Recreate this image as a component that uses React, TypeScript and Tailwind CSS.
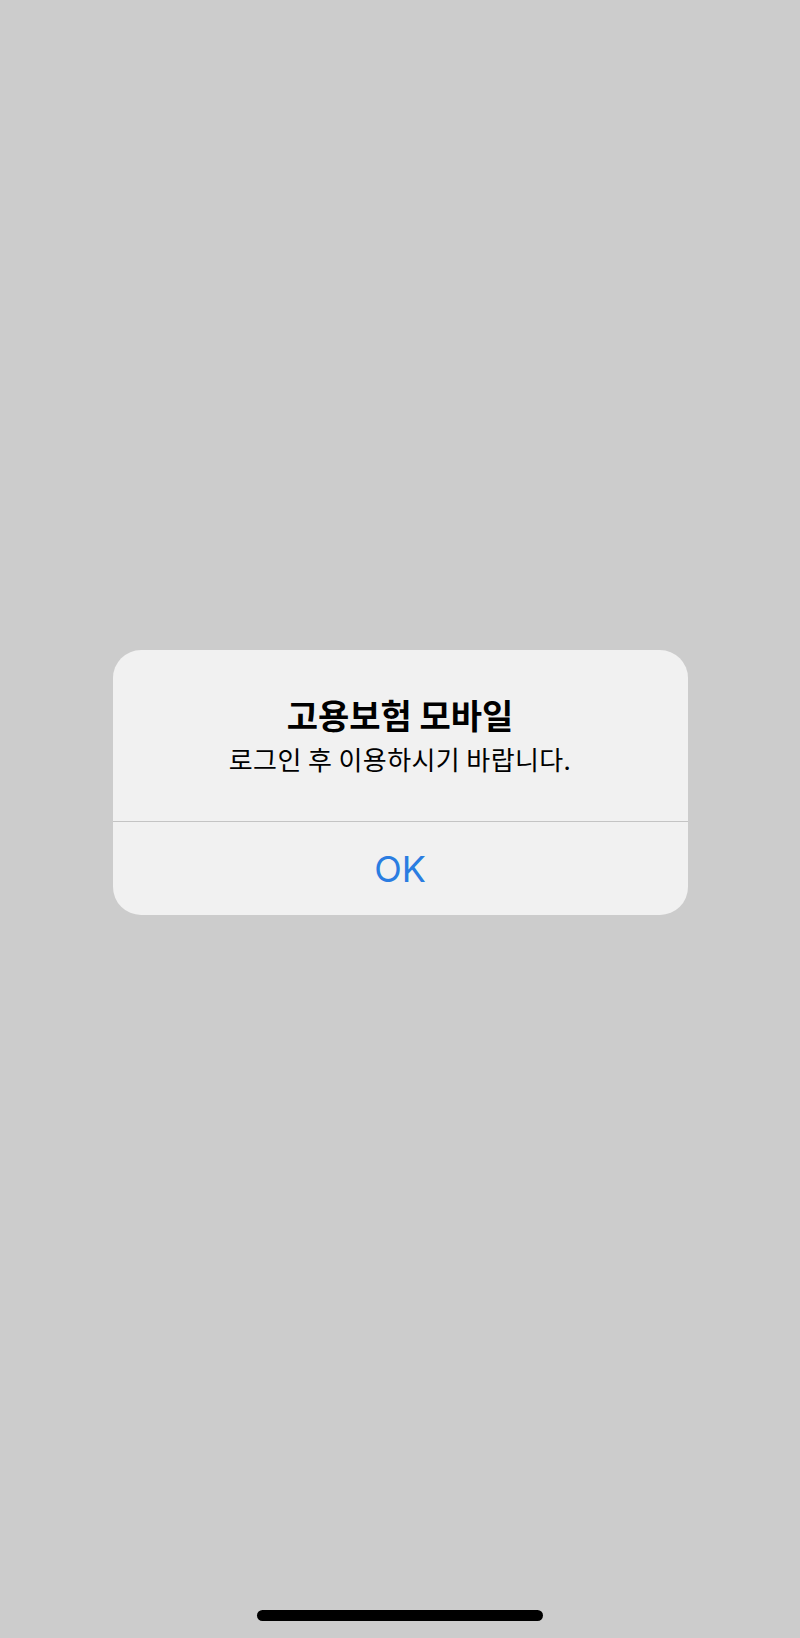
export default function App() {
  return (
    <main className="flex h-[1638px] w-full flex-col bg-[#cccccc]">
      <div className="pt-[650px]">
        <div className="mx-auto w-[575px] overflow-hidden rounded-[28px] bg-[#f1f1f1]">
          <div className="flex h-[171px] flex-col items-center pt-[44px] font-['Noto_Sans_CJK_KR',sans-serif] text-black">
            <h1 className="text-[34px] font-bold leading-[42px]">고용보험 모바일</h1>
            <p className="mt-[6px] text-[26px] leading-[34px] tracking-[0.4px]">로그인 후 이용하시기 바랍니다.</p>
          </div>
          <div className="h-px bg-[#c4c4c4]" />
          <button className="flex h-[93px] w-full items-center justify-center font-['Inter',sans-serif] text-[36px] text-[#2a7de1]">
            OK
          </button>
        </div>
      </div>
      <div className="mt-auto mb-[17px] flex justify-center">
        <div className="h-[11px] w-[286px] rounded-full bg-black" />
      </div>
    </main>
  );
}
